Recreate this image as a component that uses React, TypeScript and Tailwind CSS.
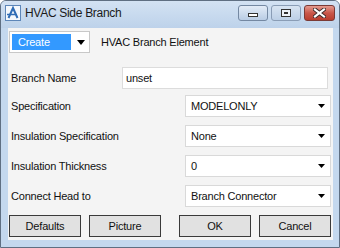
import React from "react";

const Arrow = ({ big }: { big?: boolean }) => (
  <svg width={big ? 8 : 7} height={big ? 5 : 4} viewBox={big ? "0 0 8 5" : "0 0 7 4"}>
    <path d={big ? "M0 0 H8 L4 5 Z" : "M0 0 H7 L3.5 4 Z"} fill="#000" />
  </svg>
);

const Select = ({ value }: { value: string }) => (
  <div className="w-[146px] h-[22px] bg-white border border-[#d9d9d9] flex items-center pl-[5px] pr-[5px]">
    <span className="flex-1">{value}</span>
    <Arrow />
  </div>
);

const Row = ({ label, value, first }: { label: string; value: string; first?: boolean }) => (
  <div className={`flex items-center h-[22px] ${first ? "mt-[6px]" : "mt-[8px]"}`}>
    <div className="w-[177px] pl-[3px]">{label}</div>
    <Select value={value} />
  </div>
);

const Btn = ({ label, cls }: { label: string; cls?: string }) => (
  <div className={`w-[72px] h-[22px] border border-[#3a3a3a] bg-[#e1e1e1] flex items-center justify-center ${cls ?? ""}`}>
    {label}
  </div>
);

export default function App() {
  return (
    <div
      className="w-[340px] h-[248px] bg-white text-[11px] tracking-[-0.2px] text-[#111]"
      style={{ fontFamily: '"Liberation Sans", Arial, sans-serif' }}
    >
      <div className="w-[340px] h-[248px] flex flex-col border border-[#5f6f82] rounded-t-[6px] overflow-hidden bg-[#c4d8ee]">
        {/* Title bar */}
        <div className="h-[27px] flex items-start pl-[4px] pr-[4px] pt-[4px] bg-gradient-to-b from-[#d3e2f3] to-[#bdd2ea]">
          <svg width="16" height="16" viewBox="0 0 16 16" className="shrink-0">
            <rect x="0.5" y="0.5" width="15" height="15" fill="#f4f8fc" stroke="#5d86b8" />
            <path d="M3.5 13 L8 3 L12.5 13" fill="none" stroke="#2f6cb5" strokeWidth="2" />
            <path d="M2 9.5 H11" stroke="#2f6cb5" strokeWidth="1.6" />
          </svg>
          <div className="ml-[4px] text-[12px] tracking-[-0.3px] leading-[16px] text-[#1a1a1a] flex-1">
            HVAC Side Branch
          </div>
          <div className="flex gap-[3px]">
            <div className="w-[30px] h-[16px] rounded-[3px] border border-[#7488a2] bg-gradient-to-b from-[#e3ecf7] to-[#b9cce4] flex items-center justify-center">
              <div className="w-[10px] h-[4px] mt-[4px] bg-white border border-[#333]" />
            </div>
            <div className="w-[30px] h-[16px] rounded-[3px] border border-[#8a9db6] bg-gradient-to-b from-[#d8e4f2] to-[#bccfe6] flex items-center justify-center">
              <div className="w-[10px] h-[8px] border border-[#333] bg-[#eef3f9] flex items-center justify-center">
                <div className="w-[4px] h-[2px] border border-[#333]" />
              </div>
            </div>
            <div className="w-[31px] h-[16px] rounded-[3px] border border-[#7a3a36] bg-gradient-to-b from-[#e49a8f] via-[#c9574a] to-[#b93d2e] flex items-center justify-center">
              <svg width="13" height="10" viewBox="0 0 13 10">
                <path d="M2 1.5 L11 8.5 M11 1.5 L2 8.5" stroke="#3a2a2a" strokeWidth="4" strokeLinecap="square" />
                <path d="M2 1.5 L11 8.5 M11 1.5 L2 8.5" stroke="#ffffff" strokeWidth="2.2" strokeLinecap="square" />
              </svg>
            </div>
          </div>
        </div>
        {/* Body with frame */}
        <div className="flex-1 flex pl-[7px] pr-[6px] pb-[7px]">
          <div className="flex-1 bg-[#f4f4f4] flex flex-col pt-[3px]">
            <div className="flex items-center h-[22px] pl-[1px]">
              <div className="w-[81px] h-[22px] bg-white border border-[#c8c8c8] flex items-center pl-[2px]">
                <div className="w-[59px] h-[16px] bg-[#3399ff] text-white flex items-center pl-[6px]">Create</div>
                <div className="ml-[6px]"><Arrow big /></div>
              </div>
              <div className="ml-[11px]">HVAC Branch Element</div>
            </div>
            <div className="flex items-center h-[22px] mt-[14px]">
              <div className="w-[114px] pl-[3px]">Branch Name</div>
              <div className="w-[206px] h-[22px] bg-white border border-[#dcdcdc] flex items-center pl-[3px]">unset</div>
            </div>
            <Row first label="Specification" value="MODELONLY" />
            <Row label="Insulation Specification" value="None" />
            <Row label="Insulation Thickness" value="0" />
            <Row label="Connect Head to" value="Branch Connector" />
            <div className="flex items-center h-[22px] mt-[8px] pl-[1px]">
              <Btn label="Defaults" />
              <Btn label="Picture" cls="ml-[8px]" />
              <Btn label="OK" cls="ml-[18px]" />
              <Btn label="Cancel" cls="ml-[8px]" />
            </div>
          </div>
        </div>
      </div>
    </div>
  );
}
